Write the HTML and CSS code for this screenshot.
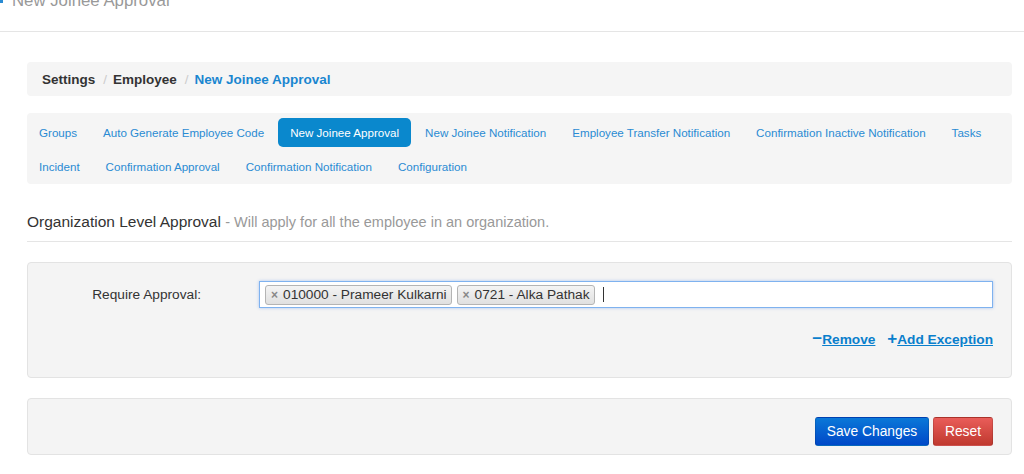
FILE: index.html
```html
<!DOCTYPE html>
<html lang="en">
  <head>
    <meta charset="UTF-8" />
    <meta name="viewport" content="width=device-width, initial-scale=1.0" />
    <title>New Joinee Approval</title>
    <link rel="stylesheet" href="styles.css">
  </head>
  <body>
    <div class="page-header">
      <span class="page-icon"></span>
      <h3>New Joinee Approval</h3>
    </div>
    <div class="content">
      <ul class="breadcrumb">
        <li><a href="#">Settings</a><span class="divider">/</span></li>
        <li><a href="#">Employee</a><span class="divider">/</span></li>
        <li class="active">New Joinee Approval</li>
      </ul>

      <ul class="nav-pills">
        <li><a href="#">Groups</a></li>
        <li><a href="#">Auto Generate Employee Code</a></li>
        <li class="active"><a href="#">New Joinee Approval</a></li>
        <li><a href="#">New Joinee Notification</a></li>
        <li><a href="#">Employee Transfer Notification</a></li>
        <li><a href="#">Confirmation Inactive Notification</a></li>
        <li><a href="#">Tasks</a></li>
        <li><a href="#">Incident</a></li>
        <li><a href="#">Confirmation Approval</a></li>
        <li><a href="#">Confirmation Notification</a></li>
        <li><a href="#">Configuration</a></li>
      </ul>

      <h4 class="section-title">Organization Level Approval <small>- Will apply for all the employee in an organization.</small></h4>

      <div class="well">
        <div class="control-group">
          <label class="control-label">Require Approval:</label>
          <div class="select-box">
            <span class="choice"><span class="choice-close">&times;</span>010000 - Prameer Kulkarni</span>
            <span class="choice"><span class="choice-close">&times;</span>0721 - Alka Pathak</span>
            <span class="caret-line"></span>
          </div>
        </div>
        <div class="actions-links">
          <a href="#"><span class="icon">&minus;</span>Remove</a>
          <a href="#"><span class="icon">+</span>Add Exception</a>
        </div>
      </div>

      <div class="form-actions">
        <button class="btn btn-primary">Save Changes</button>
        <button class="btn btn-danger">Reset</button>
      </div>
    </div>
  </body>
</html>
```

FILE: styles.css
```css
* {
  padding: 0;
  margin: 0;
  box-sizing: border-box;
}

body {
  font-family: "Liberation Sans", Arial, sans-serif;
  font-size: 13.7px;
  color: #333;
  background: #fff;
  overflow: hidden;
}

a {
  color: #2a8bd3;
  text-decoration: none;
}

ul {
  list-style: none;
}

.page-header {
  height: 32px;
  border-bottom: 1px solid #e5e5e5;
  display: flex;
  align-items: flex-start;
}

.page-header h3 {
  font-size: 16.8px;
  font-weight: normal;
  color: #999;
  line-height: 20px;
  margin-top: -9px;
  margin-left: 9px;
}

.page-icon {
  width: 3px;
  height: 3px;
  background: #2a8bd3;
}

.content {
  padding: 0 12px 0 27px;
}

.breadcrumb {
  margin-top: 30px;
  height: 34px;
  padding: 0 15px;
  background: #f5f5f5;
  border-radius: 4px;
  display: flex;
  align-items: center;
  font-size: 13.5px;
  font-weight: bold;
}

.breadcrumb a {
  color: #333;
}

.breadcrumb .divider {
  color: #ccc;
  font-weight: normal;
  padding: 0 6px 0 8px;
}

.breadcrumb .active {
  color: #1a86d0;
}

.nav-pills {
  margin-top: 17px;
  padding: 5px 0 3px;
  background: #f5f5f5;
  border-radius: 4px;
  display: flex;
  flex-wrap: wrap;
  column-gap: 2px;
  row-gap: 5px;
}

.nav-pills a {
  display: block;
  padding: 0 12px;
  height: 29px;
  line-height: 29px;
  font-size: 11.6px;
  border-radius: 5px;
}

.nav-pills .active a {
  background: #0a88cd;
  color: #fff;
}

.section-title {
  margin-top: 28px;
  font-size: 15.5px;
  font-weight: normal;
  line-height: 20px;
  padding-bottom: 9px;
  border-bottom: 1px solid #e5e5e5;
}

.section-title small {
  font-size: 14.5px;
  color: #999;
}

.well {
  margin-top: 20px;
  background: #f4f4f4;
  border: 1px solid #e3e3e3;
  border-radius: 4px;
  padding: 18px 18px 30px 19px;
}

.control-group {
  display: flex;
  align-items: center;
}

.control-label {
  width: 154px;
  text-align: right;
  margin-right: 58px;
}

.select-box {
  flex: 1;
  height: 27px;
  background: #fff;
  border: 1px solid #7fb2ef;
  box-shadow: 0 0 3px rgba(82, 140, 236, 0.45);
  display: flex;
  align-items: center;
  padding-left: 5px;
  gap: 5px;
}

.choice {
  height: 20px;
  line-height: 18px;
  padding: 0 4px 0 5px;
  border: 1px solid #b4b4b4;
  border-radius: 3px;
  background: linear-gradient(#f4f4f4, #e0e0e0);
  color: #333;
  white-space: nowrap;
}

.choice-close {
  color: #888;
  font-size: 12px;
  font-weight: bold;
  margin-right: 5px;
}

.caret-line {
  width: 1px;
  height: 15px;
  background: #333;
  margin-left: 3px;
}

.actions-links {
  margin-top: 24px;
  text-align: right;
  font-weight: bold;
  line-height: 14px;
}

.actions-links a {
  color: #0a7fcc;
  text-decoration: underline;
  margin-left: 8px;
}

.actions-links .icon {
  display: inline-block;
  text-decoration: none;
  font-size: 17px;
  font-weight: 900;
}

.form-actions {
  margin-top: 20px;
  background: #f4f4f4;
  border: 1px solid #e3e3e3;
  border-radius: 4px;
  padding: 18px 18px 8px;
  display: flex;
  justify-content: flex-end;
  gap: 4px;
  height: 57px;
}

.btn {
  height: 29px;
  padding: 0 8px;
  font-family: "Liberation Sans", Arial, sans-serif;
  font-size: 13.8px;
  white-space: nowrap;
  color: #fff;
  border-radius: 3px;
  border: 1px solid rgba(0, 0, 0, 0.12);
  cursor: pointer;
}

.btn-primary {
  width: 114px;
  background: linear-gradient(#0a78d8, #0048c8);
}

.btn-danger {
  width: 60px;
  background: linear-gradient(#e95d59, #c0392f);
}
```
